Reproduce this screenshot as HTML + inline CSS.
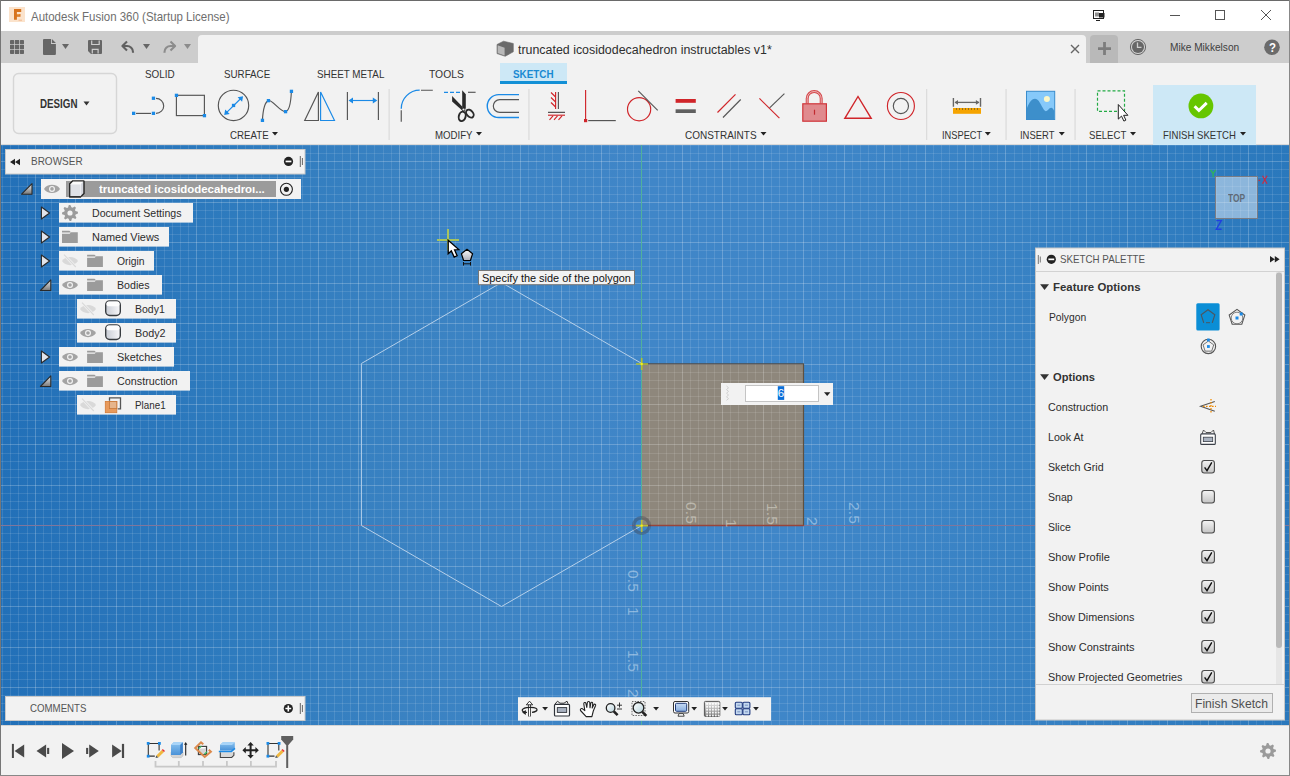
<!DOCTYPE html>
<html><head><meta charset="utf-8">
<style>
*{box-sizing:border-box}
html,body{margin:0;padding:0}
body{width:1290px;height:776px;position:relative;overflow:hidden;background:#f2f2f2;font-family:"Liberation Sans",sans-serif;color:#333}
.a{position:absolute}
.t{position:absolute;white-space:pre;line-height:1}
svg{position:absolute;overflow:visible}
</style></head><body>

<div class="a" style="left:0;top:0;width:1290px;height:31px;background:#fff"></div>
<div class="a" style="left:0;top:31px;width:1290px;height:32px;background:#cdcdcd"></div>
<div class="a" style="left:198px;top:35px;width:888px;height:28px;background:#f2f2f2;border-radius:4px 4px 0 0"></div>
<div class="a" style="left:1090px;top:35px;width:28px;height:28px;background:#b9b9b9;border-radius:4px 4px 0 0"></div>
<div class="a" style="left:0;top:63px;width:1290px;height:82px;background:#f2f2f2"></div>
<div class="a" style="left:0;top:725px;width:1290px;height:51px;background:#f2f2f2;border-top:1px solid #d4d4d4"></div>

<div class="a" id="canvas" style="left:0;top:145px;width:1290px;height:580px;background:linear-gradient(to right,#2270b8 0%,#2874ba 7.8%,#2e7bbe 18%,#3a82c2 31.5%,#4086c8 50%,#3f86c8 62%,#3882c4 79%,#2a78bc 100%);overflow:hidden">
<svg width="1290" height="580" viewBox="0 145 1290 580" style="left:0;top:0">
<rect x="641.5" y="364" width="162" height="161.5" fill="#8e877c"/>
<path d="M2.5 145v580M10.5 145v580M18.5 145v580M27.5 145v580M43.5 145v580M51.5 145v580M59.5 145v580M67.5 145v580M83.5 145v580M91.5 145v580M99.5 145v580M107.5 145v580M124.5 145v580M132.5 145v580M140.5 145v580M148.5 145v580M164.5 145v580M172.5 145v580M180.5 145v580M188.5 145v580M205.5 145v580M213.5 145v580M221.5 145v580M229.5 145v580M245.5 145v580M253.5 145v580M261.5 145v580M269.5 145v580M285.5 145v580M294.5 145v580M302.5 145v580M310.5 145v580M326.5 145v580M334.5 145v580M342.5 145v580M350.5 145v580M366.5 145v580M374.5 145v580M383.5 145v580M391.5 145v580M407.5 145v580M415.5 145v580M423.5 145v580M431.5 145v580M447.5 145v580M455.5 145v580M463.5 145v580M472.5 145v580M488.5 145v580M496.5 145v580M504.5 145v580M512.5 145v580M528.5 145v580M536.5 145v580M544.5 145v580M552.5 145v580M569.5 145v580M577.5 145v580M585.5 145v580M593.5 145v580M609.5 145v580M617.5 145v580M625.5 145v580M633.5 145v580M649.5 145v580M658.5 145v580M666.5 145v580M674.5 145v580M690.5 145v580M698.5 145v580M706.5 145v580M714.5 145v580M730.5 145v580M738.5 145v580M747.5 145v580M755.5 145v580M771.5 145v580M779.5 145v580M787.5 145v580M795.5 145v580M811.5 145v580M819.5 145v580M827.5 145v580M836.5 145v580M852.5 145v580M860.5 145v580M868.5 145v580M876.5 145v580M892.5 145v580M900.5 145v580M908.5 145v580M916.5 145v580M933.5 145v580M941.5 145v580M949.5 145v580M957.5 145v580M973.5 145v580M981.5 145v580M989.5 145v580M997.5 145v580M1014.5 145v580M1022.5 145v580M1030.5 145v580M1038.5 145v580M1054.5 145v580M1062.5 145v580M1070.5 145v580M1078.5 145v580M1094.5 145v580M1103.5 145v580M1111.5 145v580M1119.5 145v580M1135.5 145v580M1143.5 145v580M1151.5 145v580M1159.5 145v580M1175.5 145v580M1183.5 145v580M1192.5 145v580M1200.5 145v580M1216.5 145v580M1224.5 145v580M1232.5 145v580M1240.5 145v580M1256.5 145v580M1264.5 145v580M1272.5 145v580M1281.5 145v580M0 145.5h1290M0 153.5h1290M0 169.5h1290M0 177.5h1290M0 186.5h1290M0 194.5h1290M0 210.5h1290M0 218.5h1290M0 226.5h1290M0 234.5h1290M0 250.5h1290M0 258.5h1290M0 266.5h1290M0 275.5h1290M0 291.5h1290M0 299.5h1290M0 307.5h1290M0 315.5h1290M0 331.5h1290M0 339.5h1290M0 347.5h1290M0 355.5h1290M0 372.5h1290M0 380.5h1290M0 388.5h1290M0 396.5h1290M0 412.5h1290M0 420.5h1290M0 428.5h1290M0 436.5h1290M0 453.5h1290M0 461.5h1290M0 469.5h1290M0 477.5h1290M0 493.5h1290M0 501.5h1290M0 509.5h1290M0 517.5h1290M0 533.5h1290M0 542.5h1290M0 550.5h1290M0 558.5h1290M0 574.5h1290M0 582.5h1290M0 590.5h1290M0 598.5h1290M0 614.5h1290M0 622.5h1290M0 631.5h1290M0 639.5h1290M0 655.5h1290M0 663.5h1290M0 671.5h1290M0 679.5h1290M0 695.5h1290M0 703.5h1290M0 711.5h1290M0 720.5h1290" stroke="#fff" stroke-opacity="0.11" stroke-width="1" fill="none"/><path d="M35.5 145v580M75.5 145v580M116.5 145v580M156.5 145v580M196.5 145v580M237.5 145v580M277.5 145v580M318.5 145v580M358.5 145v580M399.5 145v580M439.5 145v580M480.5 145v580M520.5 145v580M561.5 145v580M601.5 145v580M641.5 145v580M682.5 145v580M722.5 145v580M763.5 145v580M803.5 145v580M844.5 145v580M884.5 145v580M925.5 145v580M965.5 145v580M1005.5 145v580M1046.5 145v580M1086.5 145v580M1127.5 145v580M1167.5 145v580M1208.5 145v580M1248.5 145v580M0 161.5h1290M0 202.5h1290M0 242.5h1290M0 283.5h1290M0 323.5h1290M0 364.5h1290M0 404.5h1290M0 444.5h1290M0 485.5h1290M0 525.5h1290M0 566.5h1290M0 606.5h1290M0 647.5h1290M0 687.5h1290" stroke="#fff" stroke-opacity="0.22" stroke-width="1" fill="none"/>
<rect x="0" y="525" width="1290" height="1" fill="#80769c"/>
<rect x="641" y="145" width="1" height="580" fill="#50b09c"/>
<line x1="641" y1="363.9" x2="804" y2="363.9" stroke="#524c48" stroke-width="1.4"/>
<line x1="803.5" y1="364" x2="803.5" y2="526" stroke="#5e5040" stroke-width="1.2"/>
<line x1="641" y1="525.5" x2="804" y2="525.5" stroke="#98443a" stroke-width="1.3"/>
<polyline points="641.8,525.5 501.5,606.5 361.4,525.5 361.4,363.5 501.5,282.5 641.8,363.5" fill="none" stroke="#b6d0ea" stroke-width="1"/>
</svg>
</div>

<svg width="1290" height="31" viewBox="0 0 1290 31" style="left:0;top:0">
<rect x="9" y="7" width="16" height="15" fill="#fbe3cc"/>
<path d="M14 9 h7.2 v2.9 h-4.3 v2.2 h3.6 v2.6 h-3.6 v3 h-2.9z" fill="#d8741e"/>
<path d="M16.9 14.1 h2.6 v1.2 h-2.6z" fill="#eea050"/>
<path d="M18.5 20.2 h3.5" stroke="#f0b080" stroke-width="0.8"/>
<rect x="1093.5" y="10.5" width="10" height="8" fill="none" stroke="#222" stroke-width="1"/>
<rect x="1099" y="13" width="5.5" height="4.5" fill="#222"/>
<path d="M1096 12.5 v4 M1098 12.5 v4" stroke="#222" stroke-width="1"/>
<path d="M1096 20.5 h4" stroke="#222" stroke-width="1"/>
<path d="M1170 15.5 h10" stroke="#555" stroke-width="1"/>
<rect x="1215.5" y="10.5" width="9" height="9" fill="none" stroke="#555" stroke-width="1"/>
<path d="M1261 10 l10 10 M1271 10 l-10 10" stroke="#555" stroke-width="1"/>
</svg>
<div class="t" style="left:30.70px;top:9.55px;font-size:13px;font-weight:400;color:#6e6e6e;font-family:'Liberation Sans',sans-serif;transform:scaleX(0.8832);transform-origin:0 0;">Autodesk Fusion 360 (Startup License)</div>

<svg width="1290" height="63" viewBox="0 0 1290 63" style="left:0;top:0">
<g fill="#666">
<rect x="10" y="40" width="4.2" height="4.2" rx="0.8"/><rect x="14.9" y="40" width="4.2" height="4.2"/><rect x="19.8" y="40" width="4.2" height="4.2" rx="0.8"/>
<rect x="10" y="44.9" width="4.2" height="4.2"/><rect x="14.9" y="44.9" width="4.2" height="4.2"/><rect x="19.8" y="44.9" width="4.2" height="4.2"/>
<rect x="10" y="49.8" width="4.2" height="4.2" rx="0.8"/><rect x="14.9" y="49.8" width="4.2" height="4.2"/><rect x="19.8" y="49.8" width="4.2" height="4.2" rx="0.8"/>
</g>
<path d="M44 39 h7 v4.9 h4.9 v10 a1 1 0 0 1 -1 1 h-10.9 a1 1 0 0 1 -1 -1 v-13.9 a1 1 0 0 1 1 -1z" fill="#666"/>
<path d="M51.9 39 l4 4 h-4z" fill="#666"/>
<path d="M62 44 h7 l-3.5 5z" fill="#666"/>
<path d="M89 40 h12 a1 1 0 0 1 1 1 v12 a1 1 0 0 1 -1 1 h-10 l-3 -3 v-10 a1 1 0 0 1 1 -1z" fill="#666"/>
<path d="M91.7 40.5 v4 h7.5 v-4" fill="none" stroke="#cdcdcd" stroke-width="1.2"/>
<path d="M92.3 53.5 v-4.2 h5.8 v4.2" fill="none" stroke="#cdcdcd" stroke-width="1.2"/>
<path d="M127 41.5 l-4.6 4.5 l4.6 4.5 M122.4 46 h4.6 a6 6 0 0 1 6 6 v0.8" fill="none" stroke="#606060" stroke-width="2.1" stroke-linejoin="round"/>
<path d="M143 44 h7 l-3.5 5z" fill="#666"/>
<path d="M170.5 41.5 l4.6 4.5 l-4.6 4.5 M175.1 46 h-4.6 a6 6 0 0 0 -6 6 v0.8" fill="none" stroke="#8c8c8c" stroke-width="2.1" stroke-linejoin="round"/>
<path d="M184 44 h7 l-3.5 5z" fill="#8c8c8c"/>
<path d="M497 44.5 L503.5 41.2 L513.3 43.5 V51.8 L505.2 56.3 L497 53.6z" fill="#6a6a6a" stroke="#6a6a6a" stroke-width="0.6" stroke-linejoin="round"/>
<path d="M497.6 45.2 L504.6 47.7 V55.4 L497.6 53.1z" fill="#b8b8b8"/>
<path d="M1071 45 l8 8 M1079 45 l-8 8" stroke="#666" stroke-width="1.4"/>
<path d="M1098 48.6 h13 M1104.5 42 v13" stroke="#7d7d7d" stroke-width="2.8"/>
<circle cx="1138" cy="47" r="7.6" fill="none" stroke="#666" stroke-width="1"/>
<circle cx="1138" cy="47" r="6" fill="#666"/>
<path d="M1137.5 42.5 v4.8 h4" fill="none" stroke="#cdcdcd" stroke-width="1.3"/>
<circle cx="1272" cy="47.2" r="7.8" fill="#6b6b6b"/>
</svg>
<div class="t" style="left:517.80px;top:43.80px;font-size:12px;font-weight:400;color:#2e2e2e;font-family:'Liberation Sans',sans-serif;transform:scaleX(1.0335);transform-origin:0 0;">truncated icosidodecahedron instructables v1*</div><div class="t" style="left:1170.30px;top:41.62px;font-size:11.5px;font-weight:400;color:#404040;font-family:'Liberation Sans',sans-serif;transform:scaleX(0.8803);transform-origin:0 0;">Mike Mikkelson</div><div class="t" style="left:1268.50px;top:41.58px;font-size:12.5px;font-weight:700;color:#fff;font-family:'Liberation Sans',sans-serif;transform:scaleX(0.9162);transform-origin:0 0;">?</div>

<svg width="1290" height="145" viewBox="0 0 1290 145" style="left:0;top:0">
<rect x="1" y="144" width="1288" height="1" fill="#d9d9d9"/>
<rect x="13.5" y="73.5" width="103" height="60" rx="5" fill="none" stroke="#d6d6d6" stroke-width="1.4"/>
<rect x="500" y="63" width="67" height="21" fill="#cde8f6"/>
<rect x="500" y="81" width="67" height="3" fill="#1390d6"/>
<rect x="1153" y="85" width="103" height="60" fill="#cde8f6"/>
<g fill="#dcdcdc"><rect x="388.5" y="89" width="1.3" height="51"/><rect x="528.3" y="89" width="1.3" height="51"/><rect x="926" y="89" width="1.3" height="51"/><rect x="1005.4" y="89" width="1.3" height="51"/><rect x="1074.4" y="89" width="1.3" height="51"/></g>
<path d="M83.5 101.5 h6 l-3.0 4z" fill="#333"/><path d="M272 132 h6 l-3.0 3.6z" fill="#222"/><path d="M476 132 h6 l-3.0 3.6z" fill="#222"/><path d="M760.5 132 h6 l-3.0 3.6z" fill="#222"/><path d="M984.8 132 h6 l-3.0 3.6z" fill="#222"/><path d="M1058.8 132 h6 l-3.0 3.6z" fill="#222"/><path d="M1130 132 h6 l-3.0 3.6z" fill="#222"/><path d="M1240 132 h6 l-3.0 3.6z" fill="#222"/>
<!-- line -->
<g stroke="#555" stroke-width="1.15" fill="none">
<path d="M136 113.4 h15"/><path d="M156 98.4 a7.7 7.5 0 0 1 0 15"/>
<rect x="176.4" y="95.3" width="28" height="20.3"/>
<circle cx="233.5" cy="105.4" r="15.2"/>
<path d="M262.4 120.3 C263 110 265 102 268.4 100.6 C272 99 280 112 285.5 111.6 C290 111 291 100 291.4 91.3"/>
<path d="M318.4 92 v28.5 h-13.7z"/>
<path d="M347.4 92 v28 M378.4 92 v28"/>
</g>
<g fill="#1b8ae6">
<rect x="132" y="111.7" width="3.3" height="3.3"/><rect x="151.8" y="111.7" width="3.3" height="3.3"/><rect x="151.8" y="96.6" width="3.3" height="3.3"/>
<rect x="174.8" y="93.7" width="3.3" height="3.3"/><rect x="202.8" y="114" width="3.3" height="3.3"/>
<rect x="231.9" y="103.8" width="3.3" height="3.3"/>
<rect x="260.8" y="118.7" width="3.3" height="3.3"/><rect x="266.8" y="99" width="3.3" height="3.3"/><rect x="283.9" y="110" width="3.3" height="3.3"/><rect x="289.8" y="89.7" width="3.3" height="3.3"/>
<path d="M224.2 115 l5.5 -1 l-4.5 -4.5z M243.1 96.2 l-5.5 1 l4.5 4.5z"/>
<path d="M348.5 100.5 l4.5 -3 v6z M377.3 100.5 l-4.5 -3 v6z"/>
</g>
<g stroke="#1b8ae6" stroke-width="1.15" fill="none">
<path d="M226 113.2 l15.3 -15.2"/>
<path d="M320.6 92 v28.5 h13.9z"/>
<path d="M351 100.5 h24"/>
</g>
<!-- fillet -->
<path d="M419.7 90.2 a18.5 18.5 0 0 0 -18.45 18.5" fill="none" stroke="#1b8ae6" stroke-width="1.3"/>
<path d="M421 90.2 h11.8 M401.25 110.2 v11.6" stroke="#555" stroke-width="1.15"/>
<!-- trim scissors -->
<path d="M444 92.3 h16" stroke="#1b8ae6" stroke-width="1.2" stroke-dasharray="4 2"/>
<path d="M468 92.3 h7.6" stroke="#555" stroke-width="1.15"/>
<path d="M462.2 90.2 L465.8 94.3 L465.8 108.8 L462.2 108.8 Z" fill="#2a2a2a"/>
<path d="M452.1 96.1 L462.2 106.6 L462.6 110.8 L452.1 101.5 Z" fill="#2a2a2a"/>
<ellipse cx="462.2" cy="116.4" rx="3.4" ry="4.8" transform="rotate(15 462.2 116.4)" fill="none" stroke="#2a2a2a" stroke-width="1.9"/>
<ellipse cx="469.9" cy="113.6" rx="4.5" ry="3.1" transform="rotate(48 469.9 113.6)" fill="none" stroke="#2a2a2a" stroke-width="1.9"/>
<circle cx="463.5" cy="109.5" r="1.8" fill="#2a2a2a"/><circle cx="463.5" cy="109.5" r="1.1" fill="#f2f2f2"/>
<!-- offset -->
<path d="M519 94.6 h-20.3 a11.45 11.45 0 0 0 0 22.9 h20.3" fill="none" stroke="#1b8ae6" stroke-width="1.4"/>
<path d="M519 99.6 h-19.3 a6.4 6.4 0 0 0 0 12.8 h19.3" fill="none" stroke="#555" stroke-width="1.15"/>
<!-- fix -->
<g stroke="#d0252a" stroke-width="1.15" fill="none">
<path d="M555.6 92 v17"/><path d="M551 92.5 l4.6 4.5 M551 97.5 l4.6 4.5 M551 102.5 l4.6 4.5"/>
<path d="M548 115.2 h17"/><path d="M549.5 119.8 l3.5 -4 M554 119.8 l3.5 -4 M558.5 119.8 l3.5 -4"/>
</g>
<path d="M558.4 92 v17 M548 112.4 h17" stroke="#555" stroke-width="1.15"/>
<!-- perpendicular -->
<path d="M585.6 90 v29" stroke="#d0252a" stroke-width="1.15"/>
<rect x="584" y="119" width="3.2" height="3.2" fill="#d0252a"/>
<path d="M588.2 120.6 h27.6" stroke="#555" stroke-width="1.15"/>
<!-- tangent -->
<circle cx="639.1" cy="109.2" r="11.6" fill="none" stroke="#d0252a" stroke-width="1.15"/>
<path d="M638.3 90.8 l19.4 19.6" stroke="#555" stroke-width="1.15"/>
<!-- equal -->
<rect x="675.6" y="99" width="20.2" height="3.8" fill="#d0252a"/>
<rect x="675.6" y="109.3" width="20.2" height="3.7" fill="#606060"/>
<!-- parallel -->
<path d="M717.5 112.5 l18 -18.2" stroke="#d0252a" stroke-width="1.15"/>
<path d="M723 117.5 l17.7 -18" stroke="#555" stroke-width="1.15"/>
<!-- perpendicular X -->
<path d="M759.4 98.4 l20 19.8" stroke="#d0252a" stroke-width="1.15"/>
<path d="M769.6 107.8 l14.8 -14.2" stroke="#555" stroke-width="1.15"/>
<!-- lock -->
<path d="M807.2 103.5 v-5 a7 7 0 0 1 14 0 v5" fill="none" stroke="#d54a4e" stroke-width="3"/>
<path d="M807.2 103.5 v-5 a7 7 0 0 1 14 0 v5" fill="none" stroke="#f2d0d0" stroke-width="0.8"/>
<rect x="802.8" y="103.8" width="23.6" height="17.4" fill="#e08a8e" stroke="#d0353a" stroke-width="1.2"/>
<path d="M814.5 109.7 v5" stroke="#c02a30" stroke-width="1.2"/>
<!-- midpoint triangle -->
<path d="M844.8 118.3 l13.2 -21.8 l13.2 21.8z" fill="none" stroke="#d0252a" stroke-width="1.4"/>
<!-- concentric -->
<circle cx="900.9" cy="106" r="13.5" fill="none" stroke="#d0252a" stroke-width="1.15"/>
<circle cx="900.9" cy="106" r="7.6" fill="none" stroke="#555" stroke-width="1.15"/>
<!-- inspect ruler -->
<path d="M953.4 98 v8.8 M980.5 98 v8.8" stroke="#666" stroke-width="1.4"/>
<path d="M955 102.4 h24" stroke="#666" stroke-width="1.3"/>
<path d="M954.5 102.4 l3.5 -2.4 v4.8z M979.4 102.4 l-3.5 -2.4 v4.8z" fill="#666"/>
<rect x="953" y="108" width="28" height="5.8" fill="#f5a400"/>
<path d="M956.5 108 v2 M959.5 108 v2 M962.5 108 v2 M965.5 108 v2 M968.5 108 v2 M971.5 108 v2 M974.5 108 v2 M977.5 108 v2" stroke="#8a6a20" stroke-width="0.9"/>
<!-- insert image -->
<rect x="1026.5" y="91.3" width="28.2" height="28.2" fill="#86c9fa" stroke="#3a8ccc" stroke-width="1"/>
<path d="M1027 108 C1031 98 1036 96 1040 103 C1044 110 1045 113 1048 110 C1051 106 1053 108 1054.2 111 V119 H1027z" fill="#3d8fcb"/>
<circle cx="1046.9" cy="98.9" r="3" fill="#fbf7c8"/>
<!-- select -->
<rect x="1097.5" y="90.8" width="27" height="20.5" fill="none" stroke="#22aa44" stroke-width="1.2" stroke-dasharray="3 2"/>
<path d="M1118.3 104.5 v14.6 l3.2 -3 l2.4 5 l2 -1 l-2.3 -4.8 h4.3z" fill="#fff" stroke="#222" stroke-width="1"/>
<!-- finish -->
<circle cx="1200.9" cy="105.9" r="12.4" fill="#66c600"/>
<path d="M1194.6 106.2 l4.3 4.3 l7.8 -7.6" fill="none" stroke="#fff" stroke-width="3"/>
</svg>
<div class="t" style="left:145.30px;top:68.72px;font-size:11.5px;font-weight:400;color:#333;font-family:'Liberation Sans',sans-serif;transform:scaleX(0.8605);transform-origin:0 0;">SOLID</div><div class="t" style="left:224.20px;top:68.72px;font-size:11.5px;font-weight:400;color:#333;font-family:'Liberation Sans',sans-serif;transform:scaleX(0.8504);transform-origin:0 0;">SURFACE</div><div class="t" style="left:317.00px;top:68.72px;font-size:11.5px;font-weight:400;color:#333;font-family:'Liberation Sans',sans-serif;transform:scaleX(0.8550);transform-origin:0 0;">SHEET METAL</div><div class="t" style="left:429.00px;top:68.72px;font-size:11.5px;font-weight:400;color:#333;font-family:'Liberation Sans',sans-serif;transform:scaleX(0.8973);transform-origin:0 0;">TOOLS</div><div class="t" style="left:513.30px;top:68.72px;font-size:11.5px;font-weight:700;color:#1a8ad2;font-family:'Liberation Sans',sans-serif;transform:scaleX(0.8587);transform-origin:0 0;">SKETCH</div><div class="t" style="left:40.00px;top:98.40px;font-size:12px;font-weight:700;color:#333;font-family:'Liberation Sans',sans-serif;transform:scaleX(0.8149);transform-origin:0 0;">DESIGN</div><div class="t" style="left:230.30px;top:129.72px;font-size:11.5px;font-weight:400;color:#333;font-family:'Liberation Sans',sans-serif;transform:scaleX(0.8450);transform-origin:0 0;">CREATE</div><div class="t" style="left:434.50px;top:129.72px;font-size:11.5px;font-weight:400;color:#333;font-family:'Liberation Sans',sans-serif;transform:scaleX(0.8383);transform-origin:0 0;">MODIFY</div><div class="t" style="left:685.00px;top:129.72px;font-size:11.5px;font-weight:400;color:#333;font-family:'Liberation Sans',sans-serif;transform:scaleX(0.8687);transform-origin:0 0;">CONSTRAINTS</div><div class="t" style="left:941.50px;top:129.72px;font-size:11.5px;font-weight:400;color:#333;font-family:'Liberation Sans',sans-serif;transform:scaleX(0.8065);transform-origin:0 0;">INSPECT</div><div class="t" style="left:1020.40px;top:129.72px;font-size:11.5px;font-weight:400;color:#333;font-family:'Liberation Sans',sans-serif;transform:scaleX(0.8197);transform-origin:0 0;">INSERT</div><div class="t" style="left:1089.20px;top:129.72px;font-size:11.5px;font-weight:400;color:#333;font-family:'Liberation Sans',sans-serif;transform:scaleX(0.8335);transform-origin:0 0;">SELECT</div><div class="t" style="left:1163.30px;top:129.72px;font-size:11.5px;font-weight:400;color:#333;font-family:'Liberation Sans',sans-serif;transform:scaleX(0.8316);transform-origin:0 0;">FINISH SKETCH</div>
<svg width="1290" height="776" viewBox="0 0 1290 776" style="left:0;top:0">
<rect x="5.5" y="149.5" width="299.5" height="24.5" fill="#f2f2f2" stroke="#c9c9c9" stroke-width="1"/>
<path d="M10 162 l5 -3.2 v6.4z M15 162 l5 -3.2 v6.4z" fill="#222"/>
<circle cx="288.5" cy="161.4" r="4.6" fill="#222"/><rect x="285.6" y="160.6" width="5.8" height="1.7" fill="#fff"/>
<path d="M300.3 156 v11 M302.4 158 v7" stroke="#555" stroke-width="0.9"/>
<rect x="41" y="179" width="260" height="20" fill="#f2f2f2"/>
<rect x="66" y="181" width="210" height="16" fill="#9b9b9b"/>
<defs><linearGradient id="ex189" x1="0" y1="0" x2="0" y2="1"><stop offset="0" stop-color="#f0f0f0"/><stop offset="1" stop-color="#777"/></linearGradient></defs><path d="M32 183.6 v10.6 h-10.4z" fill="url(#ex189)" stroke="#2a2a2a" stroke-width="1.1" stroke-linejoin="round"/>
<path d="M44 188.9 C47 183.4 57 183.4 60 188.9 C57 194.4 47 194.4 44 188.9z" fill="#a3a3a3"/><circle cx="52" cy="188.9" r="2.4" fill="none" stroke="#f2f2f2" stroke-width="1.2"/>
<path d="M69.6 184 l3 -3 h11.3 v12.5 l-3.3 3.3 h-11z" fill="#dfe1e6" stroke="#2a2a2a" stroke-width="1.2" stroke-linejoin="round"/>
<path d="M69.6 184 h11.3 l3 -3 M80.9 184 v12.8" fill="none" stroke="#fff" stroke-width="0.8"/>
<path d="M72.6 181 h11.3 l-3 3 h-11.3z" fill="#fbfbfb"/><path d="M80.9 184 l3 -3 v12.5 l-3 3.3z" fill="#d4d7de"/>
<path d="M69.6 184 l3 -3 h11.3 v12.5 l-3.3 3.3 h-11z" fill="none" stroke="#2a2a2a" stroke-width="1.2" stroke-linejoin="round"/>
<circle cx="286.4" cy="189.3" r="6" fill="none" stroke="#222" stroke-width="1.1"/><circle cx="286.4" cy="189.3" r="2.6" fill="#222"/>
<rect x="59" y="203" width="134" height="19.6" fill="#f2f2f2"/>
<path d="M41.4 207 l8.2 6 l-8.2 6z" fill="#e2e4ea" stroke="#2a2a2a" stroke-width="1.1" stroke-linejoin="round"/>
<polygon points="68.83,205.09 70.39,205.01 71.41,207.37 72.48,207.76 74.77,206.57 75.93,207.63 74.97,210.02 75.46,211.05 77.91,211.83 77.99,213.39 75.63,214.41 75.24,215.48 76.43,217.77 75.37,218.93 72.98,217.97 71.95,218.46 71.17,220.91 69.61,220.99 68.59,218.63 67.52,218.24 65.23,219.43 64.07,218.37 65.03,215.98 64.54,214.95 62.09,214.17 62.01,212.61 64.37,211.59 64.76,210.52 63.57,208.23 64.63,207.07 67.02,208.03 68.05,207.54" fill="#9b9b9b"/><circle cx="70" cy="213" r="2.6" fill="#f2f2f2"/>
<rect x="59" y="227" width="110" height="19.6" fill="#f2f2f2"/>
<path d="M41.4 231 l8.2 6 l-8.2 6z" fill="#e2e4ea" stroke="#2a2a2a" stroke-width="1.1" stroke-linejoin="round"/>
<path d="M62 230.7 h7.4 l1.3 1.4 v0.4 h-8.7z M62 233.7 h7.6 l1.5 -1.5 h6.7 v10.9 h-15.8z" fill="#9b9b9b"/>
<rect x="59" y="251" width="95" height="19.6" fill="#f2f2f2"/>
<path d="M41.4 255 l8.2 6 l-8.2 6z" fill="#e2e4ea" stroke="#2a2a2a" stroke-width="1.1" stroke-linejoin="round"/>
<g fill="#d9d9d9"><path d="M62 261 C65 255.5 75 255.5 78 261 C75 266.5 65 266.5 62 261z"/></g><path d="M64 254.7 L75.8 267" stroke="#f2f2f2" stroke-width="2.6"/><path d="M64 254.7 L75.8 267" stroke="#d9d9d9" stroke-width="1.1"/>
<path d="M87.1 254.7 h7.4 l1.3 1.4 v0.4 h-8.7z M87.1 257.7 h7.6 l1.5 -1.5 h6.7 v10.9 h-15.8z" fill="#9b9b9b"/>
<rect x="59" y="275" width="103" height="19.6" fill="#f2f2f2"/>
<defs><linearGradient id="ex285" x1="0" y1="0" x2="0" y2="1"><stop offset="0" stop-color="#f0f0f0"/><stop offset="1" stop-color="#777"/></linearGradient></defs><path d="M50.8 279.90000000000003 v10.6 h-10.4z" fill="url(#ex285)" stroke="#2a2a2a" stroke-width="1.1" stroke-linejoin="round"/>
<path d="M62 285 C65 279.5 75 279.5 78 285 C75 290.5 65 290.5 62 285z" fill="#a3a3a3"/><circle cx="70" cy="285" r="2.4" fill="none" stroke="#f2f2f2" stroke-width="1.2"/>
<path d="M87.1 278.7 h7.4 l1.3 1.4 v0.4 h-8.7z M87.1 281.7 h7.6 l1.5 -1.5 h6.7 v10.9 h-15.8z" fill="#9b9b9b"/>
<rect x="77" y="299" width="99" height="19.6" fill="#f2f2f2"/>
<g fill="#d9d9d9"><path d="M80 309 C83 303.5 93 303.5 96 309 C93 314.5 83 314.5 80 309z"/></g><path d="M82 302.7 L93.8 315" stroke="#f2f2f2" stroke-width="2.6"/><path d="M82 302.7 L93.8 315" stroke="#d9d9d9" stroke-width="1.1"/>
<defs><linearGradient id="bg300" x1="0" x2="1"><stop offset="0" stop-color="#c8ccd4"/><stop offset="1" stop-color="#f8f8fa"/></linearGradient></defs><rect x="105.7" y="300.9" width="14.6" height="14.6" rx="4" fill="url(#bg300)" stroke="#383c40" stroke-width="1.4"/><path d="M106.5 306.2 h13" stroke="#fff" stroke-width="0"/><rect x="106.5" y="301.59999999999997" width="13" height="4.6" rx="2" fill="#fdfdfd"/>
<rect x="77" y="323" width="99" height="19.6" fill="#f2f2f2"/>
<path d="M80 333 C83 327.5 93 327.5 96 333 C93 338.5 83 338.5 80 333z" fill="#a3a3a3"/><circle cx="88" cy="333" r="2.4" fill="none" stroke="#f2f2f2" stroke-width="1.2"/>
<defs><linearGradient id="bg324" x1="0" x2="1"><stop offset="0" stop-color="#c8ccd4"/><stop offset="1" stop-color="#f8f8fa"/></linearGradient></defs><rect x="105.7" y="324.9" width="14.6" height="14.6" rx="4" fill="url(#bg324)" stroke="#383c40" stroke-width="1.4"/><path d="M106.5 330.2 h13" stroke="#fff" stroke-width="0"/><rect x="106.5" y="325.59999999999997" width="13" height="4.6" rx="2" fill="#fdfdfd"/>
<rect x="59" y="347" width="115" height="19.6" fill="#f2f2f2"/>
<path d="M41.4 351 l8.2 6 l-8.2 6z" fill="#e2e4ea" stroke="#2a2a2a" stroke-width="1.1" stroke-linejoin="round"/>
<path d="M62 357 C65 351.5 75 351.5 78 357 C75 362.5 65 362.5 62 357z" fill="#a3a3a3"/><circle cx="70" cy="357" r="2.4" fill="none" stroke="#f2f2f2" stroke-width="1.2"/>
<path d="M87.1 350.7 h7.4 l1.3 1.4 v0.4 h-8.7z M87.1 353.7 h7.6 l1.5 -1.5 h6.7 v10.9 h-15.8z" fill="#9b9b9b"/>
<rect x="59" y="371" width="131" height="19.6" fill="#f2f2f2"/>
<defs><linearGradient id="ex381" x1="0" y1="0" x2="0" y2="1"><stop offset="0" stop-color="#f0f0f0"/><stop offset="1" stop-color="#777"/></linearGradient></defs><path d="M50.8 375.90000000000003 v10.6 h-10.4z" fill="url(#ex381)" stroke="#2a2a2a" stroke-width="1.1" stroke-linejoin="round"/>
<path d="M62 381 C65 375.5 75 375.5 78 381 C75 386.5 65 386.5 62 381z" fill="#a3a3a3"/><circle cx="70" cy="381" r="2.4" fill="none" stroke="#f2f2f2" stroke-width="1.2"/>
<path d="M87.1 374.7 h7.4 l1.3 1.4 v0.4 h-8.7z M87.1 377.7 h7.6 l1.5 -1.5 h6.7 v10.9 h-15.8z" fill="#9b9b9b"/>
<rect x="77" y="395" width="99" height="19.6" fill="#f2f2f2"/>
<g fill="#d9d9d9"><path d="M80 405 C83 399.5 93 399.5 96 405 C93 410.5 83 410.5 80 405z"/></g><path d="M82 398.7 L93.8 411" stroke="#f2f2f2" stroke-width="2.6"/><path d="M82 398.7 L93.8 411" stroke="#d9d9d9" stroke-width="1.1"/>
<path d="M109.5 400.8 v-3 h11 v11 h-2.8" fill="none" stroke="#555" stroke-width="1.3"/>
<rect x="105.3" y="401.4" width="11.5" height="11.3" fill="#e89a5c" stroke="#d37b38" stroke-width="0.8"/>
<rect x="109.5" y="401.4" width="7.3" height="7.2" fill="#e6b58c" stroke="#c8783a" stroke-width="0.8"/>
</svg><div class="t" style="left:30.50px;top:155.88px;font-size:11.5px;font-weight:400;color:#555;font-family:'Liberation Sans',sans-serif;transform:scaleX(0.8684);transform-origin:0 0;">BROWSER</div><div class="t" style="left:99.20px;top:184.08px;font-size:11.2px;font-weight:700;color:#fff;font-family:'Liberation Sans',sans-serif;transform:scaleX(1.0218);transform-origin:0 0;">truncated icosidodecahedroı...</div><div class="t" style="left:92.30px;top:207.80px;font-size:11.3px;font-weight:400;color:#2c2c2c;font-family:'Liberation Sans',sans-serif;transform:scaleX(0.9376);transform-origin:0 0;">Document Settings</div><div class="t" style="left:92.30px;top:231.80px;font-size:11.3px;font-weight:400;color:#2c2c2c;font-family:'Liberation Sans',sans-serif;transform:scaleX(0.9683);transform-origin:0 0;">Named Views</div><div class="t" style="left:117.10px;top:255.80px;font-size:11.3px;font-weight:400;color:#2c2c2c;font-family:'Liberation Sans',sans-serif;transform:scaleX(0.9157);transform-origin:0 0;">Origin</div><div class="t" style="left:117.10px;top:279.80px;font-size:11.3px;font-weight:400;color:#2c2c2c;font-family:'Liberation Sans',sans-serif;transform:scaleX(0.9408);transform-origin:0 0;">Bodies</div><div class="t" style="left:135.20px;top:303.80px;font-size:11.3px;font-weight:400;color:#2c2c2c;font-family:'Liberation Sans',sans-serif;transform:scaleX(0.9299);transform-origin:0 0;">Body1</div><div class="t" style="left:135.20px;top:327.80px;font-size:11.3px;font-weight:400;color:#2c2c2c;font-family:'Liberation Sans',sans-serif;transform:scaleX(0.9549);transform-origin:0 0;">Body2</div><div class="t" style="left:117.10px;top:351.80px;font-size:11.3px;font-weight:400;color:#2c2c2c;font-family:'Liberation Sans',sans-serif;transform:scaleX(0.9619);transform-origin:0 0;">Sketches</div><div class="t" style="left:117.10px;top:375.80px;font-size:11.3px;font-weight:400;color:#2c2c2c;font-family:'Liberation Sans',sans-serif;transform:scaleX(0.9555);transform-origin:0 0;">Construction</div><div class="t" style="left:135.20px;top:399.80px;font-size:11.3px;font-weight:400;color:#2c2c2c;font-family:'Liberation Sans',sans-serif;transform:scaleX(0.8696);transform-origin:0 0;">Plane1</div>

<svg width="1290" height="776" viewBox="0 0 1290 776" style="left:0;top:0">
<!-- yellow endpoint markers -->
<path d="M636 364 h12 M641.7 358 v12" stroke="#b0c030" stroke-width="1.7"/>
<circle cx="641.7" cy="364" r="1.2" fill="#f0f020"/>
<circle cx="641.5" cy="525.5" r="7.8" fill="none" stroke="#3c3c46" stroke-opacity="0.38" stroke-width="3.4"/>
<path d="M636 525.6 h12 M641.7 520 v12" stroke="#b8bc3a" stroke-width="1.7"/>
<circle cx="641.7" cy="525.6" r="1.2" fill="#f0f020"/>
<!-- crosshair cursor -->
<path d="M437 240 h22 M448 229 v21.5" stroke="#a6c460" stroke-width="2"/>
<path d="M448.2 240.2 V253.8 L451.3 250.9 L454.2 257 L457.1 255.7 L454.6 249.9 L458.8 249.6 Z" fill="#fff" stroke="#000" stroke-width="1.35" stroke-linejoin="miter"/>
<defs><linearGradient id="pg" x1="0" y1="0" x2="0" y2="1"><stop offset="0" stop-color="#fdfdfd"/><stop offset="1" stop-color="#aeb0bc"/></linearGradient></defs>
<path d="M467 249.3 l5.6 4.4 l-2.2 6.8 h-6.8 l-2.2 -6.8z" fill="url(#pg)" stroke="#000" stroke-width="1.2" stroke-linejoin="round"/>
<path d="M463.5 262 v3.6 M470.5 262 v3.6 M463.5 263.8 h7" stroke="#111" stroke-width="1"/>
<!-- tooltip -->
<rect x="478.5" y="270.5" width="156" height="14.2" fill="#f2f2f2" stroke="#767676" stroke-width="1"/>
<!-- dimension input -->
<rect x="721" y="383" width="112" height="22" fill="#f2f2f2"/>
<path d="M726.5 386 l2 1.8 l-2 1.8 l2 1.8 l-2 1.8 l2 1.8 l-2 1.8 l2 1.8 l-2 1.8" fill="none" stroke="#c8c8c8" stroke-width="0.8"/>
<rect x="745.5" y="385.5" width="73" height="16" fill="#fff" stroke="#c4c4c4" stroke-width="1"/>
<rect x="777.8" y="386.2" width="6.4" height="13.7" fill="#0a6ed8"/>
<path d="M824 392.2 h6.4 l-3.2 3.8z" fill="#222"/>
<!-- viewcube -->
<rect x="1215.5" y="176.5" width="42" height="42" fill="#e4eef8" fill-opacity="0.52" stroke="#7a7c84" stroke-width="1"/>
<path d="M1210.6 169.8 l2.5 3.8 l2.5 -3.8 M1213.1 173.6 v3.6" fill="none" stroke="#2fb45a" stroke-width="1.3"/>
<path d="M1262.5 175.8 l4.6 8 M1267.1 175.8 l-4.6 8" fill="none" stroke="#c0304a" stroke-width="1.3"/>
<circle cx="1259.3" cy="180.3" r="0.9" fill="#c0304a"/>
<path d="M1216.3 220.6 h5 l-5 8.6 h5.3" fill="none" stroke="#2040e0" stroke-width="1.4"/>
</svg>
<div class="t" style="left:699.2px;top:502.2px;font-size:15.5px;color:rgba(225,225,215,0.55);transform:rotate(90deg);transform-origin:0 0;letter-spacing:0.2px">0.5</div><div class="t" style="left:739.2px;top:519.2px;font-size:15.5px;color:rgba(225,225,215,0.55);transform:rotate(90deg);transform-origin:0 0;letter-spacing:0.2px">1</div><div class="t" style="left:780.2px;top:503.2px;font-size:15.5px;color:rgba(225,225,215,0.55);transform:rotate(90deg);transform-origin:0 0;letter-spacing:0.2px">1.5</div><div class="t" style="left:820.1px;top:517.2px;font-size:15.5px;color:rgba(215,230,245,0.52);transform:rotate(90deg);transform-origin:0 0;letter-spacing:0.2px">2</div><div class="t" style="left:861.5px;top:502.2px;font-size:15.5px;color:rgba(215,230,245,0.52);transform:rotate(90deg);transform-origin:0 0;letter-spacing:0.2px">2.5</div><div class="t" style="left:641.2px;top:569.5px;font-size:15.5px;color:rgba(215,230,245,0.52);transform:rotate(90deg);transform-origin:0 0;letter-spacing:0.2px">0.5</div><div class="t" style="left:641.2px;top:606.8px;font-size:15.5px;color:rgba(215,230,245,0.52);transform:rotate(90deg);transform-origin:0 0;letter-spacing:0.2px">1</div><div class="t" style="left:641.2px;top:650px;font-size:15.5px;color:rgba(215,230,245,0.52);transform:rotate(90deg);transform-origin:0 0;letter-spacing:0.2px">1.5</div><div class="t" style="left:641.2px;top:689.2px;font-size:15.5px;color:rgba(215,230,245,0.52);transform:rotate(90deg);transform-origin:0 0;letter-spacing:0.2px">2</div><div class="t" style="left:481.50px;top:272.78px;font-size:11.2px;font-weight:400;color:#111;font-family:'Liberation Sans',sans-serif;transform:scaleX(0.9771);transform-origin:0 0;">Specify the side of the polygon</div><div class="t" style="left:777.80px;top:388.33px;font-size:11.5px;font-weight:400;color:#fff;font-family:'Liberation Sans',sans-serif;">6</div><div class="t" style="left:1228.05px;top:192.62px;font-size:11.5px;font-weight:700;color:#5f6a76;font-family:'Liberation Sans',sans-serif;transform:scaleX(0.7296);transform-origin:0 0;">TOP</div>
<svg width="1290" height="776" viewBox="0 0 1290 776" style="left:0;top:0">
<defs><linearGradient id="cbg" x1="0" y1="0" x2="0" y2="1"><stop offset="0" stop-color="#f4f4f4"/><stop offset="1" stop-color="#c4c4c4"/></linearGradient></defs>
<rect x="1035.5" y="248" width="249" height="472" fill="#f2f2f2" stroke="#c6c6c6" stroke-width="1"/>
<rect x="1036" y="271" width="248" height="1" fill="#d2d2d2"/>
<path d="M1038.3 255 v9 M1040.3 256.5 v6" stroke="#666" stroke-width="0.9"/>
<circle cx="1051.3" cy="259.3" r="4.6" fill="#222"/><rect x="1048.4" y="258.5" width="5.8" height="1.7" fill="#fff"/>
<path d="M1270 256 l4.8 3.2 l-4.8 3.2z M1274.8 256 l4.8 3.2 l-4.8 3.2z" fill="#222"/>
<rect x="1276" y="272" width="6" height="412" fill="#e6e6e6"/>
<rect x="1276" y="272.5" width="6" height="375.5" rx="3" fill="#b9b9b9"/>
<rect x="1036" y="684" width="248" height="1" fill="#d0d0d0"/>
<path d="M1040.1 284.2 h8.9 l-4.45 5.9z" fill="#333"/>
<path d="M1040.1 374.2 h8.9 l-4.45 5.9z" fill="#333"/>
<rect x="1196.3" y="303.3" width="23.3" height="27.2" rx="1.5" fill="#0b8ed6"/>
<path d="M1203.77 322.82 L1201.15 314.78 L1208.00 309.80 L1214.85 314.78 L1212.23 322.82" fill="none" stroke="#4c5660" stroke-width="1.1"/>
<path d="M1206 322.7 h4" stroke="#4c5660" stroke-width="1"/>
<polygon points="1237.00,309.40 1244.80,315.07 1241.82,324.23 1232.18,324.23 1229.20,315.07" fill="none" stroke="#555" stroke-width="1.1"/>
<circle cx="1237" cy="318" r="5.8" fill="none" stroke="#777" stroke-width="0.9"/>
<rect x="1235.5" y="316.5" width="3" height="3" fill="#1b8ae6"/><rect x="1239.7" y="312.5" width="3" height="3" fill="#1b8ae6"/>
<circle cx="1208.4" cy="346.4" r="7.2" fill="none" stroke="#555" stroke-width="1.1"/>
<polygon points="1208.40,341.00 1213.73,344.87 1211.69,351.13 1205.11,351.13 1203.07,344.87" fill="none" stroke="#666" stroke-width="0.9"/>
<rect x="1207" y="345.1" width="2.8" height="2.8" fill="#1b8ae6"/><rect x="1207" y="338.6" width="2.8" height="2.8" fill="#1b8ae6"/>
<path d="M1214.8 401.4 l-14.2 4.9 l14.2 5" fill="none" stroke="#555" stroke-width="1.1"/>
<path d="M1211 399 v14.5 M1203 406.3 h13" fill="none" stroke="#f08a00" stroke-width="1.3" stroke-dasharray="1.6 1.4"/>
<path d="M1202 434 l1.5 -4 l2.5 2.5 h5 l2.5 -2.5 l1 4" fill="none" stroke="#444" stroke-width="0.9"/>
<rect x="1200.7" y="433.9" width="14.6" height="10.5" rx="1" fill="#fff" stroke="#3a3f48" stroke-width="1.1"/>
<rect x="1203.3" y="437.2" width="9.4" height="4.4" fill="#a9b2c0" stroke="#3a3f48" stroke-width="0.8"/>
<rect x="1201.8" y="460.5" width="12.6" height="12.5" rx="2.5" fill="url(#cbg)" stroke="#4a4a4a" stroke-width="1.1"/>
<path d="M1204.6 467.3 l2.4 3.3 l4.8 -8.2" fill="none" stroke="#111" stroke-width="1.4"/>
<rect x="1201.8" y="490.5" width="12.6" height="12.5" rx="2.5" fill="url(#cbg)" stroke="#4a4a4a" stroke-width="1.1"/>
<rect x="1201.8" y="520.5" width="12.6" height="12.5" rx="2.5" fill="url(#cbg)" stroke="#4a4a4a" stroke-width="1.1"/>
<rect x="1201.8" y="550.5" width="12.6" height="12.5" rx="2.5" fill="url(#cbg)" stroke="#4a4a4a" stroke-width="1.1"/>
<path d="M1204.6 557.3 l2.4 3.3 l4.8 -8.2" fill="none" stroke="#111" stroke-width="1.4"/>
<rect x="1201.8" y="580.5" width="12.6" height="12.5" rx="2.5" fill="url(#cbg)" stroke="#4a4a4a" stroke-width="1.1"/>
<path d="M1204.6 587.3 l2.4 3.3 l4.8 -8.2" fill="none" stroke="#111" stroke-width="1.4"/>
<rect x="1201.8" y="610.5" width="12.6" height="12.5" rx="2.5" fill="url(#cbg)" stroke="#4a4a4a" stroke-width="1.1"/>
<path d="M1204.6 617.3 l2.4 3.3 l4.8 -8.2" fill="none" stroke="#111" stroke-width="1.4"/>
<rect x="1201.8" y="640.5" width="12.6" height="12.5" rx="2.5" fill="url(#cbg)" stroke="#4a4a4a" stroke-width="1.1"/>
<path d="M1204.6 647.3 l2.4 3.3 l4.8 -8.2" fill="none" stroke="#111" stroke-width="1.4"/>
<rect x="1201.8" y="670.5" width="12.6" height="12.5" rx="2.5" fill="url(#cbg)" stroke="#4a4a4a" stroke-width="1.1"/>
<path d="M1204.6 677.3 l2.4 3.3 l4.8 -8.2" fill="none" stroke="#111" stroke-width="1.4"/>
<rect x="1191.5" y="693.5" width="81" height="19" fill="#ebebeb" stroke="#b0b0b0" stroke-width="1"/>
</svg><div class="t" style="left:1060.30px;top:254.48px;font-size:11.2px;font-weight:400;color:#555;font-family:'Liberation Sans',sans-serif;transform:scaleX(0.8737);transform-origin:0 0;">SKETCH PALETTE</div><div class="t" style="left:1053.10px;top:281.98px;font-size:11.2px;font-weight:700;color:#333;font-family:'Liberation Sans',sans-serif;transform:scaleX(1.0200);transform-origin:0 0;">Feature Options</div><div class="t" style="left:1048.50px;top:311.98px;font-size:11.2px;font-weight:400;color:#2c2c2c;font-family:'Liberation Sans',sans-serif;transform:scaleX(0.9199);transform-origin:0 0;">Polygon</div><div class="t" style="left:1053.10px;top:371.98px;font-size:11.2px;font-weight:700;color:#333;font-family:'Liberation Sans',sans-serif;transform:scaleX(0.9937);transform-origin:0 0;">Options</div><div class="t" style="left:1195.30px;top:698.18px;font-size:12.5px;font-weight:400;color:#505050;font-family:'Liberation Sans',sans-serif;transform:scaleX(0.9716);transform-origin:0 0;">Finish Sketch</div><div class="t" style="left:1048.30px;top:401.88px;font-size:11.2px;font-weight:400;color:#2c2c2c;font-family:'Liberation Sans',sans-serif;transform:scaleX(0.9568);transform-origin:0 0;">Construction</div><div class="t" style="left:1048.30px;top:431.88px;font-size:11.2px;font-weight:400;color:#2c2c2c;font-family:'Liberation Sans',sans-serif;transform:scaleX(0.9510);transform-origin:0 0;">Look At</div><div class="t" style="left:1048.30px;top:461.88px;font-size:11.2px;font-weight:400;color:#2c2c2c;font-family:'Liberation Sans',sans-serif;transform:scaleX(0.9512);transform-origin:0 0;">Sketch Grid</div><div class="t" style="left:1048.30px;top:491.88px;font-size:11.2px;font-weight:400;color:#2c2c2c;font-family:'Liberation Sans',sans-serif;transform:scaleX(0.9449);transform-origin:0 0;">Snap</div><div class="t" style="left:1048.30px;top:521.88px;font-size:11.2px;font-weight:400;color:#2c2c2c;font-family:'Liberation Sans',sans-serif;transform:scaleX(0.9402);transform-origin:0 0;">Slice</div><div class="t" style="left:1048.30px;top:551.88px;font-size:11.2px;font-weight:400;color:#2c2c2c;font-family:'Liberation Sans',sans-serif;transform:scaleX(0.9839);transform-origin:0 0;">Show Profile</div><div class="t" style="left:1048.30px;top:581.88px;font-size:11.2px;font-weight:400;color:#2c2c2c;font-family:'Liberation Sans',sans-serif;transform:scaleX(0.9777);transform-origin:0 0;">Show Points</div><div class="t" style="left:1048.30px;top:611.88px;font-size:11.2px;font-weight:400;color:#2c2c2c;font-family:'Liberation Sans',sans-serif;transform:scaleX(0.9660);transform-origin:0 0;">Show Dimensions</div><div class="t" style="left:1048.30px;top:641.88px;font-size:11.2px;font-weight:400;color:#2c2c2c;font-family:'Liberation Sans',sans-serif;transform:scaleX(0.9865);transform-origin:0 0;">Show Constraints</div><div class="t" style="left:1048.30px;top:671.88px;font-size:11.2px;font-weight:400;color:#2c2c2c;font-family:'Liberation Sans',sans-serif;transform:scaleX(0.9641);transform-origin:0 0;">Show Projected Geometries</div>
<svg width="1290" height="776" viewBox="0 0 1290 776" style="left:0;top:0">
<defs><linearGradient id="mag" x1="0" y1="0" x2="1" y2="1"><stop offset="0" stop-color="#ffffff"/><stop offset="1" stop-color="#b8d4dc"/></linearGradient><linearGradient id="scr" x1="0" y1="0" x2="0" y2="1"><stop offset="0" stop-color="#c8dcf4"/><stop offset="1" stop-color="#88aee0"/></linearGradient><linearGradient id="grd" x1="0" y1="0" x2="0" y2="1"><stop offset="0" stop-color="#eeeeee"/><stop offset="1" stop-color="#777"/></linearGradient><linearGradient id="cube" x1="0" y1="0" x2="0" y2="1"><stop offset="0" stop-color="#8cc4f0"/><stop offset="1" stop-color="#4a92d8"/></linearGradient></defs>
<rect x="5.5" y="696.5" width="299.5" height="24" fill="#f2f2f2" stroke="#c9c9c9" stroke-width="1"/>
<circle cx="288.3" cy="708.5" r="4.6" fill="#222"/><path d="M285.4 708.5 h5.8 M288.3 705.6 v5.8" stroke="#fff" stroke-width="1.6"/>
<path d="M300.3 703 v11 M302.4 705 v7" stroke="#555" stroke-width="0.9"/>
<rect x="518" y="697.2" width="253" height="23.5" fill="#f2f2f2"/>
<path d="M529.5 716.5 v-14" stroke="#222" stroke-width="2.6"/><path d="M529.5 716.5 v-14" stroke="#fff" stroke-width="1"/>
<path d="M526.3 704.8 l3.2 -3.6 l3.2 3.6z" fill="#fff" stroke="#222" stroke-width="0.9"/>
<path d="M527 712.5 c-6 -0.5 -6.5 -3.5 -0.5 -4.8 c5 -1 11 0 10.5 2.3 c-0.3 1.3 -2.5 2 -5 2.4" fill="none" stroke="#222" stroke-width="1.2"/>
<path d="M522.2 712.5 l3.6 -2.4 v4.8z" fill="#222"/>
<path d="M542.2 707.1 h5.8 l-2.9 3.5z" fill="#222"/>
<path d="M555 704 l2.5 -2.8 l2.5 2 h4 l3 -2 l1 2.5" fill="none" stroke="#333" stroke-width="1"/>
<rect x="554.5" y="704.3" width="15" height="11.7" rx="1" fill="#fff" stroke="#2e3238" stroke-width="1.2"/>
<rect x="557.3" y="707.6" width="9.4" height="4.8" fill="#a9b2c0" stroke="#2e3238" stroke-width="0.9"/>
<path d="M586.2 716.6 L580.5 710.5 C580 709.5 580.8 708.2 582.2 708.6 L584.8 710.6 L583.8 704 C583.6 702.5 585.4 701.8 585.8 703.2 L586.8 707.5 L587.3 702.8 C587.5 701 589.7 701 589.8 702.8 L590 707.8 L590.8 703.3 C591.1 701.8 592.8 702 592.7 703.7 L592.2 708 L593.8 704.8 C594.5 703.6 596 704.2 595.6 705.5 L593.3 711 L591.9 716.6 Z" fill="#fff" stroke="#222" stroke-width="1.1" stroke-linejoin="round"/>
<circle cx="610.6" cy="708" r="4.3" fill="url(#mag)" stroke="#222" stroke-width="1.3"/>
<path d="M613.8 711.3 l3.8 3.8" stroke="#222" stroke-width="2.6"/>
<path d="M617 705.2 h5 M619.5 702.5 v5 M617 709 h5" stroke="#222" stroke-width="0.9"/>
<rect x="632" y="701.5" width="13" height="14" fill="none" stroke="#444" stroke-width="0.8" stroke-dasharray="1.5 1.2"/>
<circle cx="638.5" cy="707.8" r="5.3" fill="url(#mag)" stroke="#222" stroke-width="1.3"/>
<path d="M642.3 711.8 l4 4" stroke="#222" stroke-width="2.6"/>
<path d="M653.2 707.1 h5.8 l-2.9 3.5z" fill="#222"/>
<rect x="673.5" y="701.5" width="15.2" height="11.5" rx="1.5" fill="#fff" stroke="#333" stroke-width="1"/>
<rect x="675.5" y="703.3" width="11.2" height="8" rx="1" fill="url(#scr)" stroke="#1e3a78" stroke-width="1"/>
<path d="M678 716.2 l1 -2.6 h4.2 l1 2.6z" fill="#fff" stroke="#333" stroke-width="0.9"/>
<path d="M691.3 707.1 h5.8 l-2.9 3.5z" fill="#222"/>
<rect x="704.4" y="701.4" width="15.4" height="15" rx="1" fill="url(#grd)" stroke="#555" stroke-width="1"/>
<rect x="706.2" y="703.0" width="1.8" height="1.8" fill="#fff" fill-opacity="0.9"/><rect x="706.2" y="705.9" width="1.8" height="1.8" fill="#fff" fill-opacity="0.9"/><rect x="706.2" y="708.8" width="1.8" height="1.8" fill="#fff" fill-opacity="0.9"/><rect x="706.2" y="711.7" width="1.8" height="1.8" fill="#fff" fill-opacity="0.9"/><rect x="706.2" y="714.6" width="1.8" height="1.8" fill="#fff" fill-opacity="0.9"/><rect x="709.1" y="703.0" width="1.8" height="1.8" fill="#fff" fill-opacity="0.9"/><rect x="709.1" y="705.9" width="1.8" height="1.8" fill="#fff" fill-opacity="0.9"/><rect x="709.1" y="708.8" width="1.8" height="1.8" fill="#fff" fill-opacity="0.9"/><rect x="709.1" y="711.7" width="1.8" height="1.8" fill="#fff" fill-opacity="0.9"/><rect x="709.1" y="714.6" width="1.8" height="1.8" fill="#fff" fill-opacity="0.9"/><rect x="712.0" y="703.0" width="1.8" height="1.8" fill="#fff" fill-opacity="0.9"/><rect x="712.0" y="705.9" width="1.8" height="1.8" fill="#fff" fill-opacity="0.9"/><rect x="712.0" y="708.8" width="1.8" height="1.8" fill="#fff" fill-opacity="0.9"/><rect x="712.0" y="711.7" width="1.8" height="1.8" fill="#fff" fill-opacity="0.9"/><rect x="712.0" y="714.6" width="1.8" height="1.8" fill="#fff" fill-opacity="0.9"/><rect x="714.9" y="703.0" width="1.8" height="1.8" fill="#fff" fill-opacity="0.9"/><rect x="714.9" y="705.9" width="1.8" height="1.8" fill="#fff" fill-opacity="0.9"/><rect x="714.9" y="708.8" width="1.8" height="1.8" fill="#fff" fill-opacity="0.9"/><rect x="714.9" y="711.7" width="1.8" height="1.8" fill="#fff" fill-opacity="0.9"/><rect x="714.9" y="714.6" width="1.8" height="1.8" fill="#fff" fill-opacity="0.9"/><rect x="717.8" y="703.0" width="1.8" height="1.8" fill="#fff" fill-opacity="0.9"/><rect x="717.8" y="705.9" width="1.8" height="1.8" fill="#fff" fill-opacity="0.9"/><rect x="717.8" y="708.8" width="1.8" height="1.8" fill="#fff" fill-opacity="0.9"/><rect x="717.8" y="711.7" width="1.8" height="1.8" fill="#fff" fill-opacity="0.9"/><rect x="717.8" y="714.6" width="1.8" height="1.8" fill="#fff" fill-opacity="0.9"/>
<path d="M722.1 707.1 h5.8 l-2.9 3.5z" fill="#222"/>
<rect x="735.3" y="702.3" width="7" height="6" rx="1" fill="#c4d8f0" stroke="#233c80" stroke-width="1.1"/>
<rect x="737.3" y="704.5" width="3" height="1.5" fill="#8fa8d0"/>
<rect x="742.9" y="702.3" width="7" height="6" rx="1" fill="#c4d8f0" stroke="#233c80" stroke-width="1.1"/>
<rect x="744.9" y="704.5" width="3" height="1.5" fill="#8fa8d0"/>
<rect x="735.3" y="708.8" width="7" height="6" rx="1" fill="#c4d8f0" stroke="#233c80" stroke-width="1.1"/>
<rect x="737.3" y="711.0" width="3" height="1.5" fill="#8fa8d0"/>
<rect x="742.9" y="708.8" width="7" height="6" rx="1" fill="#c4d8f0" stroke="#233c80" stroke-width="1.1"/>
<rect x="744.9" y="711.0" width="3" height="1.5" fill="#8fa8d0"/>
<path d="M753.1 707.1 h5.8 l-2.9 3.5z" fill="#222"/>
<g fill="#4a4a4a"><rect x="11.9" y="743.9" width="2" height="14.1"/><path d="M14.6 750.9 l9.6 -6.3 v12.8z"/><path d="M36.5 750.9 l9.6 -6.3 v12.8z"/><rect x="47.1" y="747.9" width="2.1" height="6.1"/><path d="M62 743.1 v15.9 l12 -8z"/><rect x="86.1" y="747.9" width="2.1" height="6.1"/><path d="M89.2 744.6 v12.8 l9.6 -6.4z"/><path d="M112.1 744.6 v12.8 l9.6 -6.4z"/><rect x="121.9" y="743.9" width="2.2" height="14.1"/></g>
<path d="M155.5 761 v5.6 h120.5 v-5.6 M178.8 761 v5.6 M203 761 v5.6 M226.9 761 v5.6 M250.9 761 v5.6" fill="none" stroke="#c8c8c8" stroke-width="1.8"/>
<path d="M148.3 743.5 h10.8 v7 M148.3 743.5 v12.6 h6.5" fill="none" stroke="#333" stroke-width="1.1"/><rect x="146.8" y="742" width="2.8" height="2.8" fill="#1b8ae6"/><rect x="158.0" y="742" width="2.8" height="2.8" fill="#1b8ae6"/><rect x="146.8" y="754.8" width="2.8" height="2.8" fill="#1b8ae6"/><path d="M156.3 755.5 l5.5 -5.6 l2.2 2.2 l-5.6 5.5z" fill="#f0b840"/><path d="M161.8 749.9 l1 -1 l2.2 2.2 l-1 1z" fill="#e83030"/><path d="M156.3 755.5 l-0.8 2.6 l2.9 -0.6z" fill="#555"/>
<path d="M268.0 743.5 h10.8 v7 M268.0 743.5 v12.6 h6.5" fill="none" stroke="#333" stroke-width="1.1"/><rect x="266.5" y="742" width="2.8" height="2.8" fill="#1b8ae6"/><rect x="277.7" y="742" width="2.8" height="2.8" fill="#1b8ae6"/><rect x="266.5" y="754.8" width="2.8" height="2.8" fill="#1b8ae6"/><path d="M276.0 755.5 l5.5 -5.6 l2.2 2.2 l-5.6 5.5z" fill="#f0b840"/><path d="M281.5 749.9 l1 -1 l2.2 2.2 l-1 1z" fill="#e83030"/><path d="M276.0 755.5 l-0.8 2.6 l2.9 -0.6z" fill="#555"/>
<path d="M171 752 v4 l1.6 1.6 h8.6 l1.8 -1.8 v-3.8z" fill="#d4d4d4" stroke="#b0b0b0" stroke-width="0.5"/>
<path d="M171 745 l2.6 -2.8 h9.2 v10 l-2.6 2.8 h-9.2z" fill="url(#cube)"/>
<path d="M173.6 742.2 h9.2 l-2.6 2.8 h-9.2z" fill="#a8d4f8"/><path d="M180.2 745 l2.6 -2.8 v10 l-2.6 2.8z" fill="#3d80c8"/>
<path d="M185.7 755.5 v-11.5" stroke="#222" stroke-width="1.1"/><path d="M184 744.8 l1.7 -2.8 l1.7 2.8z" fill="#222"/>
<rect x="198.4" y="746.4" width="8.2" height="8.2" fill="#d6d6d6" stroke="#3a3a3a" stroke-width="1.1"/><path d="M199 747 h7 l-1.5 1.6 h-5.5z" fill="#fff"/>
<path d="M203.3 744.3 L201 742.4 L195.2 748.1 L204.7 757 L210.9 751.8 L208.8 749.8" fill="none" stroke="#dc8a4c" stroke-width="2"/>
<path d="M198.6 748.6 l2.8 -2.4 M204.4 754.2 l2.6 -2.4" stroke="#3cc060" stroke-width="1.2"/>
<path d="M220.3 752.3 h13.6 v3 l-2.2 2.2 h-11.4z" fill="#d8d8d8"/>
<path d="M220.3 752.3 v5.2 h11.4 l2.2 -2.2 v-3" fill="none" stroke="#444" stroke-width="1.1"/>
<path d="M220 745 l2.8 -2.8 h12 v6 l-2.2 2.2 h-12.6z" fill="url(#cube)"/><path d="M222.8 742.2 h12 l-2.8 2.8 h-12z" fill="#a8d4f8"/>
<path d="M218.8 751.4 h12.6 l3.6 -3" fill="none" stroke="#1b8ae6" stroke-width="1.5"/>
<path d="M250.6 742 l-3.2 3.4 h2.2 v3.8 h-3.8 v-2.2 l-3.4 3.2 l3.4 3.2 v-2.2 h3.8 v3.8 h-2.2 l3.2 3.4 l3.2 -3.4 h-2.2 v-3.8 h3.8 v2.2 l3.4 -3.2 l-3.4 -3.2 v2.2 h-3.8 v-3.8 h2.2z" fill="#222"/>
<path d="M281.2 736 h12 v3.5 l-4.8 5.4 h-2.4 l-4.8 -5.4z" fill="#5f5f5f"/><rect x="286.2" y="744" width="2" height="24" fill="#5f5f5f"/>
<polygon points="1266.83,743.09 1268.39,743.01 1269.43,745.28 1270.52,745.67 1272.77,744.57 1273.93,745.63 1273.06,747.97 1273.56,749.01 1275.91,749.83 1275.99,751.39 1273.72,752.43 1273.33,753.52 1274.43,755.77 1273.37,756.93 1271.03,756.06 1269.99,756.56 1269.17,758.91 1267.61,758.99 1266.57,756.72 1265.48,756.33 1263.23,757.43 1262.07,756.37 1262.94,754.03 1262.44,752.99 1260.09,752.17 1260.01,750.61 1262.28,749.57 1262.67,748.48 1261.57,746.23 1262.63,745.07 1264.97,745.94 1266.01,745.44" fill="#9b9b9b"/><circle cx="1268" cy="751" r="2.6" fill="#f2f2f2"/>
</svg><div class="t" style="left:30.30px;top:703.12px;font-size:11.5px;font-weight:400;color:#555;font-family:'Liberation Sans',sans-serif;transform:scaleX(0.8421);transform-origin:0 0;">COMMENTS</div>

<div class="a" style="left:0;top:0;width:1290px;height:1px;background:#6a6a6a"></div>
<div class="a" style="left:0;top:0;width:1px;height:776px;background:#777"></div>
<div class="a" style="left:1289px;top:0;width:1px;height:776px;background:#888"></div>
<div class="a" style="left:0;top:775px;width:1290px;height:1px;background:#888"></div>

</body></html>
